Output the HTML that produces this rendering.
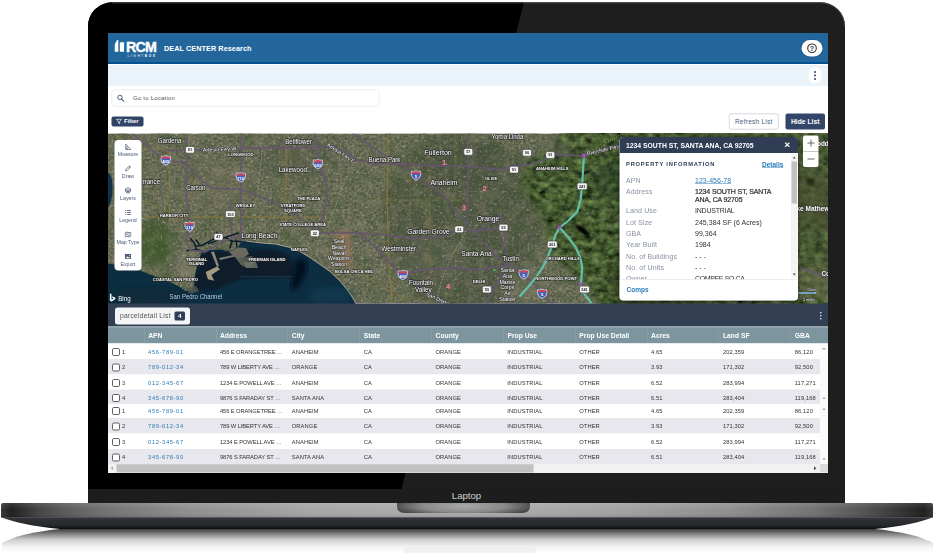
<!DOCTYPE html>
<html lang="en">
<head>
<meta charset="utf-8">
<title>DEAL CENTER Research</title>
<style>
html,body{margin:0;padding:0;background:#fff}
body{width:935px;height:553px;position:relative;overflow:hidden;font-family:"Liberation Sans",sans-serif}
#frame{position:absolute;left:0;top:0;width:935px;height:553px}
/* everything inside #s is laid out at 2x page coordinates and scaled by .5 */
#s{position:absolute;left:0;top:0;width:1870px;height:1106px;transform:scale(.5);transform-origin:0 0;font-family:"Liberation Sans",sans-serif;color:#333}
#s *{box-sizing:border-box}
.abs{position:absolute}
#screen{position:absolute;left:216px;top:66px;width:1440px;height:880px;background:#fff;overflow:hidden}
/* coordinates inside #screen are relative to the screen: use .p wrapper shifted so that children can use page 2x coords */
#p{position:absolute;left:-216px;top:-66px;width:1870px;height:1106px}

/* header */
#hdr{left:216px;top:66px;width:1440px;height:61.8px;background:#22669c;border-bottom:4.6px solid #05518f}
#logo{left:229px;top:79px;width:24px;height:26px}
#rcm{left:252px;top:75.5px;font-size:28.5px;line-height:36px;font-weight:700;color:#fff;letter-spacing:-1.7px;-webkit-text-stroke:.7px #fff}
#lbx{left:255px;top:106.5px;font-size:6.5px;line-height:8px;color:#fff;letter-spacing:3.1px;white-space:nowrap}
#lbx b{font-weight:700}
#ttl{left:328px;top:87px;font-size:14.5px;line-height:20px;font-weight:700;color:#fff;white-space:nowrap;letter-spacing:.15px}
#help{left:1603px;top:80px;width:42px;height:33px;border-radius:17px;background:#fff;box-shadow:0 0 0 1.5px #1b5b90}
#sub{left:216px;top:129.6px;width:1440px;height:42.6px;background:#eaf3fa}
#dots{left:1617px;top:135px;width:26px;height:32px;border-radius:13px;background:#fff}
#dots i,#ldots i{position:absolute;left:11px;width:4px;height:4px;border-radius:2px;background:#2f4466}
/* toolbar */
#srch{left:223px;top:179px;width:536px;height:34px;border:1px solid #d9dde3;border-radius:6px;background:#fff}
#srch span{position:absolute;left:42px;top:8px;font-size:12px;line-height:16px;color:#555;white-space:nowrap;letter-spacing:.45px}
#filt{left:223px;top:233px;width:64px;height:20px;border-radius:4px;background:#2f4466;color:#fff;font-size:12px;font-weight:700;line-height:20px;white-space:nowrap}
#filt span{position:absolute;left:25px;top:-1px}
.btn{top:227px;height:32px;border-radius:4px;font-size:13px;line-height:30px;text-align:center;white-space:nowrap}
#bref{left:1458px;width:99px;border:1px solid #a9b2c3;color:#4a5a78;background:#fff;letter-spacing:.5px}
#bhide{left:1571px;width:79px;background:#334669;color:#fff;font-weight:700;line-height:32px;font-size:13.5px}

/* map overlays */
#tools{left:229px;top:280px;width:54px;height:261px;background:#fff;border-radius:8px}
.tl{position:absolute;left:0;width:54px;text-align:center;font-size:10.5px;line-height:12px;color:#4a5a78;white-space:nowrap}
.ti{position:absolute;left:20px;width:14px;height:14px;margin-top:1px}
#zin,#zout{left:1606px;width:30.5px;height:29px;background:#fff;color:#666}
#zin{top:271px;height:31.5px;border-radius:4px 4px 0 0;border-bottom:1px solid #dcdcdc}
#zout{top:302.5px;height:31.3px;border-radius:0 0 4px 4px}
#zin i,#zout i{position:absolute;background:#6a6a6a}
/* popup */
#pop{left:1239px;top:274px;width:357px;height:327px;background:#fff;border-radius:8px;overflow:hidden;box-shadow:0 2px 8px rgba(0,0,0,.55)}
#poph{position:absolute;left:0;top:0;width:357px;height:32px;background:#2f3d55}
#popt{position:absolute;left:13px;top:8.5px;font-size:13.6px;line-height:16px;font-weight:700;color:#fff;white-space:nowrap}
#popx{position:absolute;left:328px;top:8px;width:15px;height:15px}
#popb{position:absolute;left:0;top:31px;width:357px;height:254px;overflow:hidden}
#pinf{position:absolute;left:13px;top:14px;font-size:11.5px;line-height:16px;font-weight:700;color:#2f3d55;letter-spacing:1.6px;white-space:nowrap}
#pdet{position:absolute;left:285px;top:16px;font-size:13px;line-height:16px;font-weight:700;color:#2b7bb9;text-decoration:underline;white-space:nowrap}
.pl{position:absolute;left:13px;font-size:14px;line-height:16px;color:#8791a1;white-space:nowrap;letter-spacing:.25px}
.pv{position:absolute;left:151px;font-size:14px;line-height:16px;color:#333;white-space:nowrap;letter-spacing:.08px}
.pv b{font-weight:400;-webkit-text-stroke:.45px #333;letter-spacing:-.25px}
.pv.u{letter-spacing:-.42px}
#psb{position:absolute;left:343px;top:3px;width:13px;height:248px;background:#f4f4f4}
#psb b{position:absolute;left:1px;top:15px;width:11px;height:84px;background:#c1c1c1}
#popf{position:absolute;left:0;top:285px;width:357px;height:42px;border-top:1px solid #d8dbe0;background:#fff}
#popf span{position:absolute;left:14px;top:12px;font-size:13px;line-height:16px;font-weight:700;color:#2b7bb9}

/* list */
#lbar{left:216px;top:607px;width:1440px;height:46px;background:#323e52}
#ltab{left:230px;top:614.5px;width:150px;height:34.5px;background:#f3f4f6;border-radius:5px}
#ltab span{position:absolute;left:10px;top:9.5px;font-size:13.5px;line-height:16px;color:#555;white-space:nowrap;letter-spacing:.45px}
#ltab b{position:absolute;left:119px;top:8px;width:20.5px;height:18.5px;border-radius:3px;background:#2f3d55;color:#fff;font-size:12.5px;line-height:19px;text-align:center}
#ldots{left:1636px;top:622px;width:12px;height:20px}
#ldots i{background:#fff;left:4px;width:3px;height:3px}
#thead{left:216px;top:653px;width:1440px;height:34px;background:#7d959f;border-top:2px solid #9fb1b9}
.th{position:absolute;top:0;height:32px;border-left:1.5px solid #91a5ae;padding-left:7.5px;font-size:13.5px;line-height:32px;font-weight:700;color:#fff;white-space:nowrap}
.blk{left:216px;width:1440px;overflow:hidden;background:#fff}
.tr{position:absolute;left:0;width:1424px;height:30.8px;background:#fff;overflow:hidden}
.tr.o{background:#e7e7ed}
.tr span{position:absolute;top:0;font-size:11.5px;line-height:33.5px;color:#333;white-space:nowrap;letter-spacing:.2px}
.tr span.a{color:#2b7bb9;letter-spacing:1.25px}
.tr span.d{letter-spacing:-.17px}
.tr i{position:absolute;left:7.5px;top:9px;width:16px;height:16px;border:2px solid #606060;border-radius:3.5px;background:#fff}
.tr em{position:absolute;left:28px;top:0;font-style:normal;font-size:11.5px;line-height:33.5px;color:#333}
.vsb{position:absolute;left:1424px;top:0;width:16px;height:100%;background:#fbfbfb}
#hsb{left:216px;top:928.4px;width:1440px;height:17.6px;background:#f1f1f1}
#hsb b{position:absolute;left:17px;top:0;width:834px;height:17px;background:#c1c1c1;border-top:1.5px solid #d6d6d6}
</style>
</head>
<body>
<svg id="frame" viewBox="0 0 935 553" width="935" height="553">
  <defs>
    <linearGradient id="gBase" x1="0" y1="0" x2="935" y2="0" gradientUnits="userSpaceOnUse">
      <stop offset="0" stop-color="#3a3a3a"/>
      <stop offset="0.012" stop-color="#1d1d1d"/>
      <stop offset="0.04" stop-color="#424242"/>
      <stop offset="0.07" stop-color="#5a5a5a"/>
      <stop offset="0.11" stop-color="#707070"/>
      <stop offset="0.2" stop-color="#8f8f8f"/>
      <stop offset="0.33" stop-color="#a6a6a6"/>
      <stop offset="0.5" stop-color="#adadad"/>
      <stop offset="0.66" stop-color="#a2a2a2"/>
      <stop offset="0.78" stop-color="#8f8f8f"/>
      <stop offset="0.87" stop-color="#727272"/>
      <stop offset="0.92" stop-color="#555"/>
      <stop offset="0.955" stop-color="#3a3a3a"/>
      <stop offset="0.988" stop-color="#1d1d1d"/>
      <stop offset="1" stop-color="#3a3a3a"/>
    </linearGradient>
    <linearGradient id="gBaseV" x1="0" y1="503" x2="0" y2="517.5" gradientUnits="userSpaceOnUse">
      <stop offset="0" stop-color="#fff" stop-opacity=".12"/>
      <stop offset="0.5" stop-color="#fff" stop-opacity="0"/>
      <stop offset="1" stop-color="#000" stop-opacity=".12"/>
    </linearGradient>
    <linearGradient id="gHull" x1="0" y1="517" x2="0" y2="529" gradientUnits="userSpaceOnUse">
      <stop offset="0" stop-color="#33363a"/>
      <stop offset="0.7" stop-color="#26282b"/>
      <stop offset="1" stop-color="#0c0c0c"/>
    </linearGradient>
    <linearGradient id="gRefl" x1="0" y1="529" x2="0" y2="553" gradientUnits="userSpaceOnUse">
      <stop offset="0" stop-color="#3c3c3c"/>
      <stop offset="0.18" stop-color="#7a7a7a"/>
      <stop offset="0.45" stop-color="#cfcfcf"/>
      <stop offset="0.75" stop-color="#f4f4f4"/>
      <stop offset="1" stop-color="#fff"/>
    </linearGradient>
    <radialGradient id="gNotch" cx="463.5" cy="506" r="70" gradientUnits="userSpaceOnUse" gradientTransform="translate(0 430.1) scale(1 .15)">
      <stop offset="0" stop-color="#a8a8a8"/>
      <stop offset="0.6" stop-color="#8a8a8a"/>
      <stop offset="1" stop-color="#4a4a4a"/>
    </radialGradient>
    <clipPath id="cBezel"><path d="M112 2.3 H821 A24 24 0 0 1 845 26.3 V503 H88 V26.3 A24 24 0 0 1 112 2.3 Z"/></clipPath>
  </defs>
  <!-- reflection -->
  <path d="M60 529 H875 Q915 533 933 543 V553 H2 V543 Q20 533 60 529 Z" fill="url(#gRefl)"/>
  <rect x="404" y="547" width="132" height="8" rx="3" fill="#ececec" opacity=".7"/>
  <!-- bezel -->
  <path d="M112 2.3 H821 A24 24 0 0 1 845 26.3 V499 Q845 503 841 503 H92 Q88 503 88 499 V26.3 A24 24 0 0 1 112 2.3 Z" fill="#1e1e1e"/>
  <g clip-path="url(#cBezel)">
    <path d="M88 2 H524 L401.5 489 H88 Z" fill="#000"/>
    <rect x="88" y="489" width="757" height="14" fill="#1d1d1d"/>
  </g>
  <path d="M112 2.8 H821 A23.5 23.5 0 0 1 844.5 26.3" fill="none" stroke="#464646" stroke-width="1"/>
  <!-- base -->
  <path d="M3 503 H931 Q933 503 933 505 V517.5 H1 V505 Q1 503 3 503 Z" fill="url(#gBase)"/>
  <path d="M3 503 H931 Q933 503 933 505 V517.5 H1 V505 Q1 503 3 503 Z" fill="url(#gBaseV)"/>
  <path d="M1 517.3 H933 Q915 525 875 529 H60 Q20 525 1 517.3 Z" fill="url(#gHull)"/>
  <!-- notch -->
  <path d="M397 503 H530 V506 Q530 513 522 513 H405 Q397 513 397 506 Z" fill="url(#gNotch)"/>
  <text x="466.5" y="498.6" font-family="Liberation Sans, sans-serif" font-size="9.6" fill="#cfcfcf" text-anchor="middle">Laptop</text>
</svg>
<div id="s">
<div id="screen"><div id="p">
<!--HEADER-->
<div id="hdr" class="abs"></div>
<svg id="logo" class="abs" viewBox="0 0 24 26"><path d="M0 10.6 L5 1.6 L7.6 .4 V24.6 H0 Z M10.6 5.4 H19.2 V24.6 H10.6 Z" fill="#fff"/></svg>
<div id="rcm" class="abs">RCM</div>
<div id="lbx" class="abs">LIGHT<b>BOX</b></div>
<div id="ttl" class="abs">DEAL CENTER Research</div>
<div id="help" class="abs"><svg viewBox="0 0 42 33" width="42" height="33"><circle cx="21" cy="16.5" r="8.6" fill="none" stroke="#333" stroke-width="2.2"/><text x="21" y="21.5" font-family="Liberation Sans, sans-serif" font-weight="700" font-size="14" text-anchor="middle" fill="#333">?</text></svg></div>
<div id="sub" class="abs"></div>
<div id="dots" class="abs"><i style="top:7px"></i><i style="top:14px"></i><i style="top:21px"></i></div>
<!--TOOLBAR-->
<div id="srch" class="abs"><svg viewBox="0 0 20 20" width="17" height="17" style="position:absolute;left:9px;top:8px"><circle cx="8" cy="8" r="5.2" fill="none" stroke="#3b4c6b" stroke-width="2"/><path d="M12 12 L17 17" stroke="#3b4c6b" stroke-width="2.6" stroke-linecap="round"/></svg><span>Go to Location</span></div>
<div id="filt" class="abs"><svg viewBox="0 0 12 12" width="12" height="12" style="position:absolute;left:9px;top:4px"><path d="M1 1.5 H11 L7.2 6 V10.5 L4.8 9 V6 Z" fill="none" stroke="#fff" stroke-width="1.4" stroke-linejoin="round"/></svg><span>Filter</span></div>
<div id="bref" class="abs btn">Refresh List</div>
<div id="bhide" class="abs btn">Hide List</div>
<!--MAP-->
<svg id="map" class="abs" style="left:216px;top:267px" width="1440" height="340" viewBox="108 133.5 720 170" font-family="Liberation Sans, sans-serif">
<defs>
<filter id="urb" x="0" y="0" width="100%" height="100%" color-interpolation-filters="sRGB"><feTurbulence type="fractalNoise" baseFrequency="0.42" numOctaves="2" seed="11"/><feColorMatrix type="matrix" values="0.32 0.05 0 0 0.215  0.32 0.07 0 0 0.22  0.3 0 0.03 0 0.165  0 0 0 0 1"/></filter>
<filter id="spk" x="0" y="0" width="100%" height="100%" color-interpolation-filters="sRGB"><feTurbulence type="fractalNoise" baseFrequency="0.33" numOctaves="2" seed="5"/><feColorMatrix type="matrix" values="0 0 0 0 0.84  0 0 0 0 0.83  0 0 0 0 0.74  6 0 0 0 -3.85"/></filter>
<filter id="hil" x="0" y="0" width="100%" height="100%" color-interpolation-filters="sRGB"><feTurbulence type="fractalNoise" baseFrequency="0.13 0.17" numOctaves="4" seed="4"/><feColorMatrix type="matrix" values="0.5 0.25 0 0 -0.12  0.55 0.3 0 0 -0.083  0.4 0.1 0 0 -0.07  0 0 0 0 1"/></filter>
<filter id="grn" x="0" y="0" width="100%" height="100%" color-interpolation-filters="sRGB"><feTurbulence type="fractalNoise" baseFrequency="0.07" numOctaves="3" seed="31"/><feColorMatrix type="matrix" values="0 0 0 0 0.25  0 0 0 0 0.35  0 0 0 0 0.2  2.6 0 0 0 -1.1"/></filter>
<filter id="tan" x="0" y="0" width="100%" height="100%" color-interpolation-filters="sRGB"><feTurbulence type="fractalNoise" baseFrequency="0.09" numOctaves="3" seed="77"/><feColorMatrix type="matrix" values="0 0 0 0 0.56  0 0 0 0 0.53  0 0 0 0 0.44  0 2.6 0 0 -1.15"/></filter>
<filter id="tan2" x="0" y="0" width="100%" height="100%" color-interpolation-filters="sRGB"><feTurbulence type="fractalNoise" baseFrequency="0.16 0.22" numOctaves="3" seed="91"/><feColorMatrix type="matrix" values="0 0 0 0 0.5  0 0 0 0 0.47  0 0 0 0 0.33  0 3 0 0 -1.45"/></filter>
<filter id="blur2"><feGaussianBlur stdDeviation="2"/></filter>
<filter id="blur3"><feGaussianBlur stdDeviation="3.5"/></filter>
<filter id="blur4"><feGaussianBlur stdDeviation="5"/></filter>
<filter id="blur1"><feGaussianBlur stdDeviation=".8"/></filter>
<filter id="blurh"><feGaussianBlur stdDeviation=".45"/></filter>
<clipPath id="cm"><rect x="108" y="133.5" width="720" height="170"/></clipPath>
<mask id="mh"><rect x="100" y="120" width="740" height="200" fill="#000"/><g filter="url(#blur3)"><path d="M566 126 L550 150 L530 160 L521 176 L525 196 L540 214 L548 236 L547 252 L566 268 L584 284 L600 310 H840 V126 Z" fill="#fff"/></g></mask>
</defs>
<g clip-path="url(#cm)">
<rect x="108" y="133.5" width="720" height="170" filter="url(#urb)"/>
<g filter="url(#blur4)">
<ellipse cx="215" cy="185" rx="36" ry="26" fill="#77705c" opacity=".38"/>
<ellipse cx="156" cy="244" rx="19" ry="24" fill="#40592f" opacity=".9"/>
<ellipse cx="188" cy="266" rx="8" ry="18" fill="#918b78" opacity=".6"/>
<ellipse cx="120" cy="240" rx="8" ry="20" fill="#5e5f4c" opacity=".6"/>
<ellipse cx="300" cy="160" rx="40" ry="20" fill="#4e5346" opacity=".4"/>
<ellipse cx="470" cy="165" rx="25" ry="22" fill="#53574a" opacity=".45"/>
<ellipse cx="462" cy="220" rx="80" ry="90" fill="#34432d" opacity=".42"/>
<ellipse cx="430" cy="265" rx="40" ry="25" fill="#666659" opacity=".35"/>
<ellipse cx="520" cy="282" rx="22" ry="18" fill="#77776a" opacity=".4"/>
</g>
<g filter="url(#blur2)"><rect x="334" y="230" width="18" height="37" rx="3" fill="#8e7357" opacity=".8"/></g>
<rect x="108" y="133.5" width="720" height="170" filter="url(#grn)" opacity=".45"/><rect x="108" y="133.5" width="720" height="170" filter="url(#tan)" opacity=".4"/>
<rect x="108" y="133.5" width="720" height="170" filter="url(#spk)" opacity=".36"/>
<g mask="url(#mh)">
<rect x="108" y="133.5" width="720" height="170" filter="url(#hil)"/><rect x="108" y="133.5" width="720" height="170" filter="url(#tan2)" opacity=".4"/>
<g filter="url(#blur3)">
<path d="M700 130 L690 170 L720 200 L760 215 L800 260 L832 270 V130 Z" fill="#4a5234" opacity=".4"/>
<path d="M788 178 L798 218 L832 232 V172 Z" fill="#4f5038" opacity=".45"/>
<path d="M796 268 L832 262 V300 L800 296 Z" fill="#6b6a4e" opacity=".55"/>
<path d="M600 262 L640 275 L690 285 L720 310 H620 Z" fill="#25361f" opacity=".4"/>
<ellipse cx="610" cy="180" rx="18" ry="18" fill="#25391f" opacity=".45"/>
<ellipse cx="560" cy="150" rx="14" ry="8" fill="#5a5f4c" opacity=".6"/>
</g>
<g filter="url(#blur1)"><ellipse cx="582.3" cy="230.2" rx="8.6" ry="2.7" transform="rotate(38 582.3 230.2)" fill="#030604"/><ellipse cx="520" cy="207.8" rx="3.2" ry="2.4" fill="#0b100b" opacity=".9"/><ellipse cx="532.3" cy="198.6" rx="2.5" ry="2" fill="#10160f" opacity=".8"/><path d="M806 178 q6 -2 9 3 q-2 5 -8 3z" fill="#10180f" opacity=".7"/></g>
</g>
<g stroke="#8b7b35" fill="none" opacity=".8" filter="url(#blurh)">
<path d="M388 134 L387 200 L389 260 L392 303" stroke-width="1.3"/>
<path d="M142 217 H323" stroke-width="1.1"/>
<path d="M286 134 V226" stroke-width="1"/>
<path d="M169.5 149 V217" stroke-width="0.9"/>
<path d="M142 149 H190" stroke-width="0.9"/>
<path d="M118 134 V200" stroke-width="0.8"/>
<path d="M262 134 V150" stroke-width="0.6"/>
<path d="M141 200 L175 215" stroke-width="0.7"/>
<path d="M330 250 L372 280 L410 303" stroke-width="0.8"/>
<path d="M430 170 V304" stroke-width="0.6"/>
<path d="M455 134 V200" stroke-width="0.6"/>
<path d="M372 200 H470" stroke-width="0.5"/>
<path d="M318 233 H388" stroke-width="0.6"/>
<path d="M290 150 V205" stroke-width="0.5"/>
<path d="M410 134 V230" stroke-width="0.5"/>
</g>
<g stroke="#b3b09a" fill="none" opacity=".55" stroke-width=".9" stroke-dasharray="2 1.2"><path d="M366 150 L352 166 L343 185 L336 205 L328 225 L318 245"/><path d="M262 150 L258 190 L250 230"/><path d="M470 225 L452 255 L440 285 L436 303"/></g>
<path d="M596 152 L606 143 L616 137 L624 133" fill="none" stroke="#fff" stroke-width=".7" stroke-dasharray=".8 1.5" opacity=".75"/><path d="M600 133 L604 140 L606 143" fill="none" stroke="#fff" stroke-width=".7" stroke-dasharray=".8 1.5" opacity=".6"/>
<path d="M104 263 L125 266 L140 270.5 L150 274.5 L160 278.5 L172 283 L180 287 L185 291 L191 290.5 L194 286 L194.5 279 L196 270 L199 260 L202 251.5 L212 250 L222 249.5 L229 252 L238 247.5 L241 241.5 L246 241 L252 241.5 L262 243 L275 244 L288 247 L300 251.5 L310 257.5 L320 264.5 L330 271.5 L340 281 L349 292 L354 300 L357 306 H104 Z" fill="#0d2d40"/>
<path d="M108 172 q5 4 4.5 18 q-.5 12 -4.5 18 z" fill="#123249"/>
<g filter="url(#blur4)"><ellipse cx="330" cy="296" rx="22" ry="9" fill="#134059" opacity=".6"/><ellipse cx="150" cy="296" rx="40" ry="8" fill="#0b2638" opacity=".7"/></g>
<g filter="url(#blur1)">
<path d="M198 268 L202 253 L212 251 L226 252 L236 250 L246 250 L262 249 L278 251 L290 257 L293 268 L292 277 L262 277.5 L240 279 L214 290 L197 291 L195 280 Z" fill="#091a28" opacity=".82"/>
</g>
<g filter="url(#blur2)"><path d="M297 259 q8 -2 10 5 q1 8 -4 14 q-3 8 -8 12 q-5 2 -4 -6 q1 -8 3 -13 q0 -9 3 -12z" fill="#03121c" opacity=".92"/></g>
<g filter="url(#blurh)">
<path d="M205.7 272.1 L217.1 266.4 L220 269.3 L211.4 275 L214.3 280.7 L207.9 279.3 Z" fill="#a39a80"/>
<path d="M211 252 L214 251.5 L219 266 L217 267 Z" fill="#8b8a7a"/>
<path d="M219 258 L236 254.5 L237 256 L220 260 Z" fill="#7d7d70"/>
<path d="M229 252 L238 247.5 L246 248 L249 254 L243 258 L246 263 L241 265 L236 258 Z" fill="#6a6b60"/>
<path d="M238 258 L252 256 L256 262 L249 268 L242 266 Z" fill="#575b52" opacity=".9"/>
<path d="M243 262 L256 262 L258 268 L246 268 Z" fill="#72756a" opacity=".8"/>
<path d="M186 289 L196 286 L199 291 L190 294 Z" fill="#55594c" opacity=".8"/>
</g>
<g stroke="#0b1c2b" stroke-width="1.5" fill="none" stroke-linecap="round" stroke-linejoin="round">
<path d="M190.7 238.6 L195 244.3 L196.4 249.3 L187 250.7"/>
<path d="M196.4 249.3 L202 251.5"/>
<path d="M197 246 L202.9 245 L215.7 237.9 L217 232"/>
<path d="M208.6 243.6 L220 239.3 L238.6 232.9"/>
<path d="M199 244 L196 240"/>
<path d="M226 238 L232 241 L241 241.5"/>
<path d="M232 241 L230 248"/>
<path d="M236 240 L237 247"/>
</g>
<path d="M246 241 L262 243 L275 244 L288 247 L300 251.5 L310 257.5 L320 264.5 L330 271.5 L340 281 L349 292 L354 300 L357 306" fill="none" stroke="#c9c0a4" stroke-width=".9" opacity=".85"/>
<path d="M240 276.3 H292" stroke="#3a5666" stroke-width=".6" opacity=".8"/>
<g stroke="#66566f" stroke-width="1.9" fill="none" stroke-linejoin="round" stroke-linecap="round" opacity=".88">
<path d="M131 133 L146 145.5 L161.7 157.5 L172 161.8 L185.8 162.6 L201 180 L211.5 188.4 L240.7 189.3 L265 198.7 L290 210 L308 224 L316 233 L340 232.8 L358 233 L372 244 L390 263 L402.6 275 L425 290 L448 304"/>
<path d="M186.6 133 V200 L188 215 L189.6 226 L186 240 L190 250"/>
<path d="M240.8 133 V215 L241 240"/>
<path d="M314 133 L317 150 L319 164 L327 185 L326 205 L321 222 L316 233"/>
<path d="M165 150.5 L190 150 L240 148.5 L300 147.5 L335 147 L346 152 L358 160.5 L372 163.5 L400 164 L440 166 L468 166 L485 168 L500 170 L514 166 L533.4 164.2 L556 154.4 L583.9 156 L600 150 L620 146"/>
<path d="M353 133 L370 145 L386 156 L400 164 L418 176 L442 194 L466 222 L485 244 L501 260 L520 270 L543 292.7 L552 304"/>
<path d="M358 233 L383.8 234.6 L409.5 238.5 L440 237 L459 229.5 L478 231 L503 228"/>
<path d="M468.3 133 V200 L467 222"/>
<path d="M478 231 L500 215 L504 228 L506 250 L508 265 L496 285 L487 304"/>
<path d="M230.4 200 V214 L232 233"/>
<path d="M190 250 L205 252 L218.5 244 L232 238 L241 236"/>
<path d="M800 268 L828 277"/>
<path d="M402.6 275 L420 270 L450 268 L480 270 L508 265"/>
</g>
<g stroke="#62bfa8" stroke-width="2.2" fill="none" stroke-linejoin="round" stroke-linecap="round">
<path d="M583.9 156 L583 170 L582.2 185.3 L580.5 200 L577.4 211.4 L568 221 L559.5 227.6 L555 236 L553 243.9 L548 256 L543 266.7 L537 276 L528 287 L520 296"/>
<path d="M559.5 227.6 L568 237 L575.7 247.2 L580 257 L582.2 266.7 L581.5 277 L580.6 286.2 L585 295 L592 304"/>
</g>
<g fill="#a04bb0"><path d="M581.5 153 l5 1 l-3.5 5.5z"/><path d="M557.5 225 l4.5 1 l-3 4.5z"/><path d="M578.5 282 l4.5 1 l-3 4.5z"/><path d="M313.5 231 l5 0 l-2.5 4.5z"/></g>
<style>.c{font-size:7.8px;fill:#fff;stroke:#2a2a2a;stroke-width:1.3px;paint-order:stroke;stroke-linejoin:round}.n{font-size:4.4px;font-weight:700;fill:#fff;stroke:#222;stroke-width:1.1px;paint-order:stroke;stroke-linejoin:round}.r{font-size:5.2px;fill:#fff;stroke:#333;stroke-width:1px;paint-order:stroke;stroke-linejoin:round}.w{font-size:7.6px;fill:#bcd8f2;stroke:#0b2233;stroke-width:.7px;paint-order:stroke}.pk{font-size:7.5px;font-weight:700;fill:#f08ca8;stroke:#8a3550;stroke-width:.5px;paint-order:stroke}.sh{font-size:3.9px;font-weight:700;text-anchor:middle}</style>
<text transform="translate(169.6 143.0)" text-anchor="middle" class="c" textLength="23.5" lengthAdjust="spacingAndGlyphs">Gardena</text>
<text transform="translate(298.6 144.2)" text-anchor="middle" class="c" textLength="26.8" lengthAdjust="spacingAndGlyphs">Bellflower</text>
<text transform="translate(384.5 161.6)" text-anchor="middle" class="c" textLength="31.8" lengthAdjust="spacingAndGlyphs">Buena Park</text>
<text transform="translate(438.0 154.6)" text-anchor="middle" class="c" textLength="27.6" lengthAdjust="spacingAndGlyphs">Fullerton</text>
<text transform="translate(444.0 185.2)" text-anchor="middle" class="c" textLength="27.0" lengthAdjust="spacingAndGlyphs">Anaheim</text>
<text transform="translate(292.8 172.0)" text-anchor="middle" class="c" textLength="28.3" lengthAdjust="spacingAndGlyphs">Lakewood</text>
<text transform="translate(195.8 190.4)" text-anchor="middle" class="c" textLength="19.2" lengthAdjust="spacingAndGlyphs">Carson</text>
<text transform="translate(259.5 238.0)" text-anchor="middle" class="c" textLength="35.6" lengthAdjust="spacingAndGlyphs">Long Beach</text>
<text transform="translate(428.5 233.8)" text-anchor="middle" class="c" textLength="42.6" lengthAdjust="spacingAndGlyphs">Garden Grove</text>
<text transform="translate(398.7 251.3)" text-anchor="middle" class="c" textLength="34.6" lengthAdjust="spacingAndGlyphs">Westminster</text>
<text transform="translate(488.0 220.6)" text-anchor="middle" class="c" textLength="22.6" lengthAdjust="spacingAndGlyphs">Orange</text>
<text transform="translate(476.5 255.7)" text-anchor="middle" class="c" textLength="30.4" lengthAdjust="spacingAndGlyphs">Santa Ana</text>
<text transform="translate(510.6 261.0)" text-anchor="middle" class="c" textLength="16.3" lengthAdjust="spacingAndGlyphs">Tustin</text>
<text transform="translate(507.4 139.0)" text-anchor="middle" class="c" textLength="31.7" lengthAdjust="spacingAndGlyphs">Yorba Linda</text>
<text transform="translate(142.5 183.6)" text-anchor="start" class="c" textLength="17.6" lengthAdjust="spacingAndGlyphs">rrance</text>
<text transform="translate(421.0 285.0)" text-anchor="middle" class="c" textLength="23.8" lengthAdjust="spacingAndGlyphs">Fountain</text>
<text transform="translate(423.4 292.2)" text-anchor="middle" class="c" textLength="16.6" lengthAdjust="spacingAndGlyphs">Valley</text>
<text transform="translate(240.8 155.5) scale(0.94 1)" text-anchor="middle" class="n">LONGWOOD</text>
<text transform="translate(308.6 200.2) scale(0.94 1)" text-anchor="middle" class="n">THE PLAZA</text>
<text transform="translate(245.5 207.1) scale(0.94 1)" text-anchor="middle" class="n">WRIGLEY</text>
<text transform="translate(292.8 207.1) scale(0.94 1)" text-anchor="middle" class="n">STRATFORD</text>
<text transform="translate(292.8 212.4) scale(0.94 1)" text-anchor="middle" class="n">SQUARE</text>
<text transform="translate(174.2 216.7) scale(0.94 1)" text-anchor="middle" class="n">HARBOR CITY</text>
<text transform="translate(302.5 226.4) scale(0.94 1)" text-anchor="middle" class="n">STATE COLLEGE AREA</text>
<text transform="translate(299.4 251.0) scale(0.94 1)" text-anchor="middle" class="n">NAPLES</text>
<text transform="translate(196.6 260.6) scale(0.94 1)" text-anchor="middle" class="n">TERMINAL</text>
<text transform="translate(196.6 265.3) scale(0.94 1)" text-anchor="middle" class="n">ISLAND</text>
<text transform="translate(267.0 261.4) scale(0.94 1)" text-anchor="middle" class="n">FREEMAN ISLAND</text>
<text transform="translate(354.4 273.0) scale(0.94 1)" text-anchor="middle" class="n">BOLSA CHICA HEIL</text>
<text transform="translate(175.4 280.7) scale(0.94 1)" text-anchor="middle" class="n">COASTAL SAN PEDRO</text>
<text transform="translate(491.1 179.7) scale(0.94 1)" text-anchor="middle" class="n">OLIVE</text>
<text transform="translate(552.3 169.6) scale(0.94 1)" text-anchor="middle" class="n">ANAHEIM HILLS</text>
<text transform="translate(562.7 260.0) scale(0.94 1)" text-anchor="middle" class="n">ORCHARD HILLS</text>
<text transform="translate(556.2 280.2) scale(0.94 1)" text-anchor="middle" class="n">NORTHWOOD POINT</text>
<text transform="translate(479.0 283.1) scale(0.94 1)" text-anchor="middle" class="n">DELHI</text>
<text transform="translate(339.0 243.0)" text-anchor="middle" class="r">Seal</text>
<text transform="translate(339.0 248.8)" text-anchor="middle" class="r">Beach</text>
<text transform="translate(339.0 254.5)" text-anchor="middle" class="r">Naval</text>
<text transform="translate(339.0 260.2)" text-anchor="middle" class="r">Weapons</text>
<text transform="translate(339.0 266.0)" text-anchor="middle" class="r">Station</text>
<text transform="translate(507.4 271.8)" text-anchor="middle" class="r">Santa</text>
<text transform="translate(507.4 277.7)" text-anchor="middle" class="r">Ana</text>
<text transform="translate(507.4 283.5)" text-anchor="middle" class="r">Marine</text>
<text transform="translate(507.4 289.4)" text-anchor="middle" class="r">Corps</text>
<text transform="translate(507.4 295.2)" text-anchor="middle" class="r">Air</text>
<text transform="translate(507.4 301.1)" text-anchor="middle" class="r">Station</text>
<text transform="translate(219.7 151.0) rotate(-3)" text-anchor="middle" class="r">Artesia Fwy W</text>
<text transform="translate(340.0 154.5) rotate(33)" text-anchor="middle" class="r">Artesia Fwy E</text>
<text transform="translate(603.4 151.6) rotate(-14)" text-anchor="middle" class="r">Riverside Fwy</text>
<text transform="translate(442.0 302.6) rotate(24)" text-anchor="middle" class="r">San Diego Fwy</text>
<text transform="translate(195.8 299.2)" text-anchor="middle" class="w" textLength="52.6" lengthAdjust="spacingAndGlyphs">San Pedro Channel</text>
<text transform="translate(796.5 210.6)" text-anchor="start" class="r" style="font-size:6.4px;font-weight:700" textLength="36.5" lengthAdjust="spacingAndGlyphs">ke Mathews</text>
<text transform="translate(817.0 146.2)" text-anchor="start" class="r" style="font-size:6.4px;font-weight:700">odd</text>
<text transform="translate(821.5 275.5)" text-anchor="start" class="r" style="font-size:6.4px;font-weight:700">Co</text>
<text transform="translate(444.0 165.0)" text-anchor="middle" class="pk">1</text>
<text transform="translate(484.6 191.2)" text-anchor="middle" class="pk">2</text>
<text transform="translate(464.1 209.8)" text-anchor="middle" class="pk">3</text>
<text transform="translate(448.2 289.4)" text-anchor="middle" class="pk">4</text>
<circle cx="494.4" cy="270" r="1" fill="#3be24a"/>
<g transform="translate(165.8 160.2) scale(1.13)"><path d="M-3.9 -3.6 Q-2 -2.9 0 -3.9 Q2 -2.9 3.9 -3.6 Q4.6 -1 3.6 1.2 Q2.6 3.4 0 4.3 Q-2.6 3.4 -3.6 1.2 Q-4.6 -1 -3.9 -3.6 Z" fill="#4560b8" stroke="#e8e8f4" stroke-width=".7"/><path d="M-3.6 -3.2 Q-2 -2.6 0 -3.5 Q2 -2.6 3.6 -3.2 L3.9 -1.4 H-3.9 Z" fill="#d8414a"/><text y="2.4" class="sh" fill="#fff">405</text></g>
<g transform="translate(240.8 177.1) scale(1.13)"><path d="M-3.9 -3.6 Q-2 -2.9 0 -3.9 Q2 -2.9 3.9 -3.6 Q4.6 -1 3.6 1.2 Q2.6 3.4 0 4.3 Q-2.6 3.4 -3.6 1.2 Q-4.6 -1 -3.9 -3.6 Z" fill="#4560b8" stroke="#e8e8f4" stroke-width=".7"/><path d="M-3.6 -3.2 Q-2 -2.6 0 -3.5 Q2 -2.6 3.6 -3.2 L3.9 -1.4 H-3.9 Z" fill="#d8414a"/><text y="2.4" class="sh" fill="#fff">710</text></g>
<g transform="translate(317.9 164.0) scale(1.13)"><path d="M-3.9 -3.6 Q-2 -2.9 0 -3.9 Q2 -2.9 3.9 -3.6 Q4.6 -1 3.6 1.2 Q2.6 3.4 0 4.3 Q-2.6 3.4 -3.6 1.2 Q-4.6 -1 -3.9 -3.6 Z" fill="#4560b8" stroke="#e8e8f4" stroke-width=".7"/><path d="M-3.6 -3.2 Q-2 -2.6 0 -3.5 Q2 -2.6 3.6 -3.2 L3.9 -1.4 H-3.9 Z" fill="#d8414a"/><text y="2.4" class="sh" fill="#fff">605</text></g>
<g transform="translate(416.0 175.2) scale(1.13)"><path d="M-3.9 -3.6 Q-2 -2.9 0 -3.9 Q2 -2.9 3.9 -3.6 Q4.6 -1 3.6 1.2 Q2.6 3.4 0 4.3 Q-2.6 3.4 -3.6 1.2 Q-4.6 -1 -3.9 -3.6 Z" fill="#4560b8" stroke="#e8e8f4" stroke-width=".7"/><path d="M-3.6 -3.2 Q-2 -2.6 0 -3.5 Q2 -2.6 3.6 -3.2 L3.9 -1.4 H-3.9 Z" fill="#d8414a"/><text y="2.4" class="sh" fill="#fff">5</text></g>
<g transform="translate(189.6 226.4) scale(1.13)"><path d="M-3.9 -3.6 Q-2 -2.9 0 -3.9 Q2 -2.9 3.9 -3.6 Q4.6 -1 3.6 1.2 Q2.6 3.4 0 4.3 Q-2.6 3.4 -3.6 1.2 Q-4.6 -1 -3.9 -3.6 Z" fill="#4560b8" stroke="#e8e8f4" stroke-width=".7"/><path d="M-3.6 -3.2 Q-2 -2.6 0 -3.5 Q2 -2.6 3.6 -3.2 L3.9 -1.4 H-3.9 Z" fill="#d8414a"/><text y="2.4" class="sh" fill="#fff">110</text></g>
<g transform="translate(402.8 274.9) scale(1.13)"><path d="M-3.9 -3.6 Q-2 -2.9 0 -3.9 Q2 -2.9 3.9 -3.6 Q4.6 -1 3.6 1.2 Q2.6 3.4 0 4.3 Q-2.6 3.4 -3.6 1.2 Q-4.6 -1 -3.9 -3.6 Z" fill="#4560b8" stroke="#e8e8f4" stroke-width=".7"/><path d="M-3.6 -3.2 Q-2 -2.6 0 -3.5 Q2 -2.6 3.6 -3.2 L3.9 -1.4 H-3.9 Z" fill="#d8414a"/><text y="2.4" class="sh" fill="#fff">405</text></g>
<g transform="translate(523.7 274.2) scale(1.13)"><path d="M-3.9 -3.6 Q-2 -2.9 0 -3.9 Q2 -2.9 3.9 -3.6 Q4.6 -1 3.6 1.2 Q2.6 3.4 0 4.3 Q-2.6 3.4 -3.6 1.2 Q-4.6 -1 -3.9 -3.6 Z" fill="#4560b8" stroke="#e8e8f4" stroke-width=".7"/><path d="M-3.6 -3.2 Q-2 -2.6 0 -3.5 Q2 -2.6 3.6 -3.2 L3.9 -1.4 H-3.9 Z" fill="#d8414a"/><text y="2.4" class="sh" fill="#fff">5</text></g>
<g transform="translate(542.2 293.7) scale(1.13)"><path d="M-3.9 -3.6 Q-2 -2.9 0 -3.9 Q2 -2.9 3.9 -3.6 Q4.6 -1 3.6 1.2 Q2.6 3.4 0 4.3 Q-2.6 3.4 -3.6 1.2 Q-4.6 -1 -3.9 -3.6 Z" fill="#4560b8" stroke="#e8e8f4" stroke-width=".7"/><path d="M-3.6 -3.2 Q-2 -2.6 0 -3.5 Q2 -2.6 3.6 -3.2 L3.9 -1.4 H-3.9 Z" fill="#d8414a"/><text y="2.4" class="sh" fill="#fff">5</text></g>
<g transform="translate(190.0 149.8)"><rect x="-4.5" y="-3.4" width="9.0" height="6.8" rx="1.6" fill="#f4f4f4" stroke="#3a3a3a" stroke-width=".6"/><text y="1.45" class="sh" fill="#222">91</text></g>
<g transform="translate(230.4 214.1)"><rect x="-5.0" y="-3.4" width="10.0" height="6.8" rx="1.6" fill="#f4f4f4" stroke="#3a3a3a" stroke-width=".6"/><text y="1.45" class="sh" fill="#222">103</text></g>
<g transform="translate(314.8 233.3)"><rect x="-4.5" y="-3.4" width="9.0" height="6.8" rx="1.6" fill="#f4f4f4" stroke="#3a3a3a" stroke-width=".6"/><text y="1.45" class="sh" fill="#222">22</text></g>
<g transform="translate(218.5 236.8)"><rect x="-4.5" y="-3.4" width="9.0" height="6.8" rx="1.6" fill="#f4f4f4" stroke="#3a3a3a" stroke-width=".6"/><text y="1.45" class="sh" fill="#222">47</text></g>
<g transform="translate(459.2 229.3)"><rect x="-4.5" y="-3.4" width="9.0" height="6.8" rx="1.6" fill="#f4f4f4" stroke="#3a3a3a" stroke-width=".6"/><text y="1.45" class="sh" fill="#222">22</text></g>
<g transform="translate(468.3 151.8)"><rect x="-4.5" y="-3.4" width="9.0" height="6.8" rx="1.6" fill="#f4f4f4" stroke="#3a3a3a" stroke-width=".6"/><text y="1.45" class="sh" fill="#222">57</text></g>
<g transform="translate(503.5 227.6)"><rect x="-4.5" y="-3.4" width="9.0" height="6.8" rx="1.6" fill="#f4f4f4" stroke="#3a3a3a" stroke-width=".6"/><text y="1.45" class="sh" fill="#222">55</text></g>
<g transform="translate(527.0 152.8)"><rect x="-4.5" y="-3.4" width="9.0" height="6.8" rx="1.6" fill="#f4f4f4" stroke="#3a3a3a" stroke-width=".6"/><text y="1.45" class="sh" fill="#222">90</text></g>
<g transform="translate(550.3 155.0)"><rect x="-4.5" y="-3.4" width="9.0" height="6.8" rx="1.6" fill="#f4f4f4" stroke="#3a3a3a" stroke-width=".6"/><text y="1.45" class="sh" fill="#222">91</text></g>
<g transform="translate(514.0 169.7)"><rect x="-4.5" y="-3.4" width="9.0" height="6.8" rx="1.6" fill="#f4f4f4" stroke="#3a3a3a" stroke-width=".6"/><text y="1.45" class="sh" fill="#222">91</text></g>
<g transform="translate(582.2 186.3)"><rect x="-5.0" y="-3.4" width="10.0" height="6.8" rx="1.6" fill="#f4f4f4" stroke="#3a3a3a" stroke-width=".6"/><text y="1.45" class="sh" fill="#222">241</text></g>
<g transform="translate(552.3 244.5)"><rect x="-5.0" y="-3.4" width="10.0" height="6.8" rx="1.6" fill="#f4f4f4" stroke="#3a3a3a" stroke-width=".6"/><text y="1.45" class="sh" fill="#222">261</text></g>
<g transform="translate(584.5 289.5)"><rect x="-5.0" y="-3.4" width="10.0" height="6.8" rx="1.6" fill="#f4f4f4" stroke="#3a3a3a" stroke-width=".6"/><text y="1.45" class="sh" fill="#222">241</text></g>
<g transform="translate(486.9 289.5)"><rect x="-4.5" y="-3.4" width="9.0" height="6.8" rx="1.6" fill="#f4f4f4" stroke="#3a3a3a" stroke-width=".6"/><text y="1.45" class="sh" fill="#222">55</text></g>
<g transform="translate(109.9 293.5)"><path d="M0 0 L2.2 .8 V8.2 L5.2 6.5 L3.7 5.8 L2.8 3.6 L7.4 5.2 V7.6 L2.2 10.6 L0 9.3 Z" fill="#fff" transform="scale(.72 .76)"/><text x="8.3" y="7.1" font-size="7.1" fill="#fff" textLength="12.4" lengthAdjust="spacingAndGlyphs">Bing</text></g>
<g><text x="811.5" y="291.4" font-size="3.6" fill="#fff" text-anchor="middle" stroke="#333" stroke-width=".6" paint-order="stroke">5 km</text><rect x="798" y="292.4" width="18" height="1.3" fill="#3a8fd0" stroke="#fff" stroke-width=".3"/><text x="809" y="300.6" font-size="3.6" fill="#fff" text-anchor="middle" stroke="#333" stroke-width=".6" paint-order="stroke">2 miles</text></g>
</g></svg>
<!--/MAP-->
<div id="tools" class="abs"><svg class="ti" style="top:6px" viewBox="0 0 16 16"><path d="M3 1.5 V14 H14.5 Z M3 10 H6 V14 M6.5 6.5 L8.5 9" fill="none" stroke="#4a5a78" stroke-width="1.7" stroke-linejoin="round"/></svg><div class="tl" style="top:22px">Measure</div><svg class="ti" style="top:49px" viewBox="0 0 16 16"><path d="M2.5 13.5 L3.5 9.8 L10.5 2.8 Q11.5 1.8 12.6 2.9 L13.2 3.5 Q14.2 4.6 13.2 5.6 L6.2 12.6 Z M9.5 4 L12 6.5" fill="none" stroke="#4a5a78" stroke-width="1.7" stroke-linejoin="round"/></svg><div class="tl" style="top:65px">Draw</div><svg class="ti" style="top:93px" viewBox="0 0 16 16"><path d="M8 1.5 L13.5 4.5 V11 L8 14.5 L2.5 11 V4.5 Z M2.5 4.8 L8 8 L13.5 4.8 M8 8 V14 M2.5 8 L8 11 L13.5 8" fill="none" stroke="#4a5a78" stroke-width="1.6" stroke-linejoin="round"/></svg><div class="tl" style="top:109px">Layers</div><svg class="ti" style="top:137px" viewBox="0 0 16 16"><path d="M1.5 3.5 H4 M6 3.5 H14.5 M1.5 8 H4 M6 8 H14.5 M1.5 12.5 H4 M6 12.5 H14.5" fill="none" stroke="#4a5a78" stroke-width="1.9"/></svg><div class="tl" style="top:153px">Legend</div><svg class="ti" style="top:181px" viewBox="0 0 16 16"><path d="M1.5 4 L5.5 2.5 L10.5 4 L14.5 2.5 V12 L10.5 13.5 L5.5 12 L1.5 13.5 Z M5.5 2.5 V6 M10.5 4 V7 M3 9 Q5.5 6 8 9 Q10.5 12 13 9" fill="none" stroke="#4a5a78" stroke-width="1.6" stroke-linejoin="round"/></svg><div class="tl" style="top:197px">Map Type</div><svg class="ti" style="top:225px" viewBox="0 0 16 16"><path d="M1 2.5 H15 V13.5 H1 Z" fill="#4a5a78"/><path d="M2.5 12 L6.5 7.5 L9 10.2 L10.7 8.6 L13.5 12 Z" fill="#fff"/><circle cx="11.3" cy="5.6" r="1.2" fill="#fff"/></svg><div class="tl" style="top:241px">Export</div></div>
<div id="pop" class="abs"><div id="poph"><div id="popt">1234 SOUTH ST, SANTA ANA, CA 92705</div><svg id="popx" viewBox="0 0 14 14"><path d="M3 3 L11 11 M11 3 L3 11" stroke="#fff" stroke-width="2.4"/></svg></div>
<div id="popb"><div id="pinf">PROPERTY INFORMATION</div><div id="pdet">Details</div><div class="pl" style="top:47px">APN</div><div class="pv" style="top:47px"><a style="color:#2b7bb9;text-decoration:underline">123-456-78</a></div><div class="pl" style="top:70px">Address</div><div class="pv" style="top:70px"><b>1234 SOUTH ST, SANTA</b></div><div class="pv" style="top:86px"><b>ANA, CA 92705</b></div><div class="pl" style="top:108px">Land Use</div><div class="pv u" style="top:108px">INDUSTRIAL</div><div class="pl" style="top:131px">Lot Size</div><div class="pv" style="top:131px">245,384 SF (6 Acres)</div><div class="pl" style="top:154px">GBA</div><div class="pv" style="top:154px">99,364</div><div class="pl" style="top:176px">Year Built</div><div class="pv" style="top:176px">1984</div><div class="pl" style="top:199px">No. of Buildings</div><div class="pv" style="top:199px">- - -</div><div class="pl" style="top:221px">No. of Units</div><div class="pv" style="top:221px">- - -</div><div class="pl" style="top:243px">Owner</div><div class="pv u" style="top:243px;letter-spacing:-.75px">COMPEE SO CA</div><div id="psb"><b></b><svg viewBox="0 0 13 248" width="13" height="248" style="position:absolute;left:0;top:0"><path d="M3.5 9 L6.5 5 L9.5 9 Z M3.5 239 L6.5 243 L9.5 239 Z" fill="#505050"/></svg></div></div>
<div id="popf"><span>Comps</span></div></div>
<div id="zin" class="abs"><i style="left:9px;top:14px;width:14px;height:2px"></i><i style="left:15px;top:8px;width:2px;height:14px"></i></div>
<div id="zout" class="abs"><i style="left:9px;top:14px;width:14px;height:2px"></i></div>
<!--LIST-->
<div id="lbar" class="abs"></div><div id="ltab" class="abs"><span>parceldetail List</span><b>4</b></div><div id="ldots" class="abs"><i style="top:2px"></i><i style="top:8px"></i><i style="top:14px"></i></div>
<div id="thead" class="abs"><div class="th" style="left:71.8px;width:143.7px">APN</div><div class="th" style="left:215.5px;width:143.7px">Address</div><div class="th" style="left:359.2px;width:143.7px">City</div><div class="th" style="left:502.9px;width:143.7px">State</div><div class="th" style="left:646.6px;width:143.7px">County</div><div class="th" style="left:790.3px;width:143.7px">Prop Use</div><div class="th" style="left:934.0px;width:143.7px">Prop Use Detail</div><div class="th" style="left:1077.7px;width:143.7px">Acres</div><div class="th" style="left:1221.4px;width:143.7px">Land SF</div><div class="th" style="left:1365.1px;width:143.7px">GBA</div></div>
<div id="blk1" class="abs blk" style="top:687.0px;height:120.6px">
<div class="tr" style="top:0.0px"><i></i><em>1</em><span class="a" style="left:80.2px">456-789-01</span><span class="d" style="left:223.9px">456 E ORANGETREE …</span><span class="" style="left:367.6px">ANAHEIM</span><span class="" style="left:511.3px">CA</span><span class="" style="left:655.0px">ORANGE</span><span class="" style="left:798.7px">INDUSTRIAL</span><span class="" style="left:942.4px">OTHER</span><span class="" style="left:1086.1px">4.65</span><span class="" style="left:1229.8px">202,359</span><span class="" style="left:1373.5px">86,120</span></div>
<div class="tr o" style="top:30.8px"><i></i><em>2</em><span class="a" style="left:80.2px">789-012-34</span><span class="d" style="left:223.9px">789 W LIBERTY AVE …</span><span class="" style="left:367.6px">ORANGE</span><span class="" style="left:511.3px">CA</span><span class="" style="left:655.0px">ORANGE</span><span class="" style="left:798.7px">INDUSTRIAL</span><span class="" style="left:942.4px">OTHER</span><span class="" style="left:1086.1px">3.93</span><span class="" style="left:1229.8px">171,302</span><span class="" style="left:1373.5px">92,500</span></div>
<div class="tr" style="top:61.6px"><i></i><em>3</em><span class="a" style="left:80.2px">012-345-67</span><span class="d" style="left:223.9px">1234 E POWELL AVE …</span><span class="" style="left:367.6px">ANAHEIM</span><span class="" style="left:511.3px">CA</span><span class="" style="left:655.0px">ORANGE</span><span class="" style="left:798.7px">INDUSTRIAL</span><span class="" style="left:942.4px">OTHER</span><span class="" style="left:1086.1px">6.52</span><span class="" style="left:1229.8px">283,994</span><span class="" style="left:1373.5px">117,271</span></div>
<div class="tr o" style="top:92.4px"><i></i><em>4</em><span class="a" style="left:80.2px">345-678-90</span><span class="d" style="left:223.9px">9876 S FARADAY ST …</span><span class="" style="left:367.6px">SANTA ANA</span><span class="" style="left:511.3px">CA</span><span class="" style="left:655.0px">ORANGE</span><span class="" style="left:798.7px">INDUSTRIAL</span><span class="" style="left:942.4px">OTHER</span><span class="" style="left:1086.1px">6.51</span><span class="" style="left:1229.8px">283,404</span><span class="" style="left:1373.5px">119,168</span></div>
<div class="vsb"><svg viewBox="0 0 16 120" width="16" height="120"><path d="M5.5 12 L8 9 L10.5 12 M5.5 108 L8 111 L10.5 108" fill="none" stroke="#555" stroke-width="1.3"/></svg></div></div>
<div id="blk2" class="abs blk" style="top:807.6px;height:120.8px">
<div class="tr" style="top:-2.4px"><i></i><em>1</em><span class="a" style="left:80.2px">456-789-01</span><span class="d" style="left:223.9px">456 E ORANGETREE …</span><span class="" style="left:367.6px">ANAHEIM</span><span class="" style="left:511.3px">CA</span><span class="" style="left:655.0px">ORANGE</span><span class="" style="left:798.7px">INDUSTRIAL</span><span class="" style="left:942.4px">OTHER</span><span class="" style="left:1086.1px">4.65</span><span class="" style="left:1229.8px">202,359</span><span class="" style="left:1373.5px">86,120</span></div>
<div class="tr o" style="top:28.4px"><i></i><em>2</em><span class="a" style="left:80.2px">789-012-34</span><span class="d" style="left:223.9px">789 W LIBERTY AVE …</span><span class="" style="left:367.6px">ORANGE</span><span class="" style="left:511.3px">CA</span><span class="" style="left:655.0px">ORANGE</span><span class="" style="left:798.7px">INDUSTRIAL</span><span class="" style="left:942.4px">OTHER</span><span class="" style="left:1086.1px">3.93</span><span class="" style="left:1229.8px">171,302</span><span class="" style="left:1373.5px">92,500</span></div>
<div class="tr" style="top:59.2px"><i></i><em>3</em><span class="a" style="left:80.2px">012-345-67</span><span class="d" style="left:223.9px">1234 E POWELL AVE …</span><span class="" style="left:367.6px">ANAHEIM</span><span class="" style="left:511.3px">CA</span><span class="" style="left:655.0px">ORANGE</span><span class="" style="left:798.7px">INDUSTRIAL</span><span class="" style="left:942.4px">OTHER</span><span class="" style="left:1086.1px">6.52</span><span class="" style="left:1229.8px">283,994</span><span class="" style="left:1373.5px">117,271</span></div>
<div class="tr o" style="top:90.0px"><i></i><em>4</em><span class="a" style="left:80.2px">345-678-90</span><span class="d" style="left:223.9px">9876 S FARADAY ST …</span><span class="" style="left:367.6px">SANTA ANA</span><span class="" style="left:511.3px">CA</span><span class="" style="left:655.0px">ORANGE</span><span class="" style="left:798.7px">INDUSTRIAL</span><span class="" style="left:942.4px">OTHER</span><span class="" style="left:1086.1px">6.51</span><span class="" style="left:1229.8px">283,404</span><span class="" style="left:1373.5px">119,168</span></div>
<div class="vsb"><svg viewBox="0 0 16 120" width="16" height="120"><path d="M5.5 12 L8 9 L10.5 12 M5.5 108 L8 111 L10.5 108" fill="none" stroke="#555" stroke-width="1.3"/></svg></div></div>
<div id="hsb" class="abs"><b></b><svg viewBox="0 0 1440 17" width="1440" height="17" style="position:absolute;left:0;top:0"><path d="M10 5 L5.5 8.5 L10 12 Z" fill="#a3a3a3"/><path d="M1412 4.5 L1417 8.5 L1412 12.5 Z" fill="#505050"/><rect x="1424" y="0" width="16" height="17" fill="#dcdcdc"/></svg></div>
</div></div>
</div>
</body>
</html>
